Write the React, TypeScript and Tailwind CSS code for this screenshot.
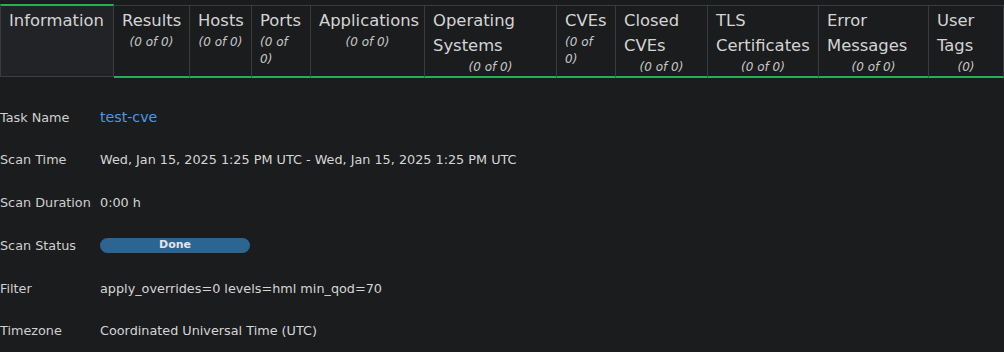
const font = { fontFamily: '"DejaVu Sans", Verdana, sans-serif' };

type Tab = { title: string; count?: string; width: string };

const tabs: Tab[] = [
  { title: "Information", width: "w-[114px]" },
  { title: "Results", count: "(0 of 0)", width: "w-[76px]" },
  { title: "Hosts", count: "(0 of 0)", width: "w-[62px]" },
  { title: "Ports", count: "(0 of 0)", width: "w-[59px]" },
  { title: "Applications", count: "(0 of 0)", width: "w-[114px]" },
  { title: "Operating Systems", count: "(0 of 0)", width: "w-[132px]" },
  { title: "CVEs", count: "(0 of 0)", width: "w-[59px]" },
  { title: "Closed CVEs", count: "(0 of 0)", width: "w-[92px]" },
  { title: "TLS Certificates", count: "(0 of 0)", width: "w-[111px]" },
  { title: "Error Messages", count: "(0 of 0)", width: "w-[110px]" },
  { title: "User Tags", count: "(0)", width: "w-[75px]" },
];

function TabItem({ tab, active }: { tab: Tab; active: boolean }) {
  const base = `${tab.width} shrink-0 px-2 pt-[2px] border-r border-[#3a3b3e] text-[16.4px] leading-[25px] text-[#d4d4d4]`;
  const state = active
    ? "border-l border-t-2 border-t-[#1fb257] border-b border-b-[#3a3b3e] mb-[1px] bg-[#222326]"
    : "mt-[1px] border-t border-t-[#3a3b3e] border-b-2 border-b-[#1fb257]";
  return (
    <div className={`${base} ${state}`}>
      <div>{tab.title}</div>
      {tab.count && (
        <div className="flex justify-center pt-[1px]">
          <span className="text-[12px] italic leading-[17px] text-[#c8c8c8]">{tab.count}</span>
        </div>
      )}
    </div>
  );
}

function Row({ label, children }: { label: string; children: React.ReactNode }) {
  return (
    <div className="flex h-[42.7px] items-center">
      <div className="w-[100px] shrink-0 text-[12.8px] text-[#d0d0d0]">{label}</div>
      <div className="text-[12.8px] text-[#d6d6d6]">{children}</div>
    </div>
  );
}

export default function App() {
  return (
    <div className="h-[352px] w-[1004px] overflow-hidden bg-[#1b1c1e]" style={font}>
      <div className="mt-1 flex h-[74px]">
        {tabs.map((t, i) => (
          <TabItem key={t.title} tab={t} active={i === 0} />
        ))}
      </div>

      <div className="pt-[18px]">
        <Row label="Task Name">
          <span className="text-[14.2px] text-[#4a9ae6]">test-cve</span>
        </Row>
        <Row label="Scan Time">
          Wed, Jan 15, 2025 1:25 PM UTC - Wed, Jan 15, 2025 1:25 PM UTC
        </Row>
        <Row label="Scan Duration">0:00 h</Row>
        <Row label="Scan Status">
          <div className="flex h-[15px] w-[150px] items-center justify-center rounded-full bg-[#2c6591] text-[11px] font-bold text-[#e4e4e4]">
            Done
          </div>
        </Row>
        <Row label="Filter">apply_overrides=0 levels=hml min_qod=70</Row>
        <Row label="Timezone">Coordinated Universal Time (UTC)</Row>
      </div>
    </div>
  );
}
